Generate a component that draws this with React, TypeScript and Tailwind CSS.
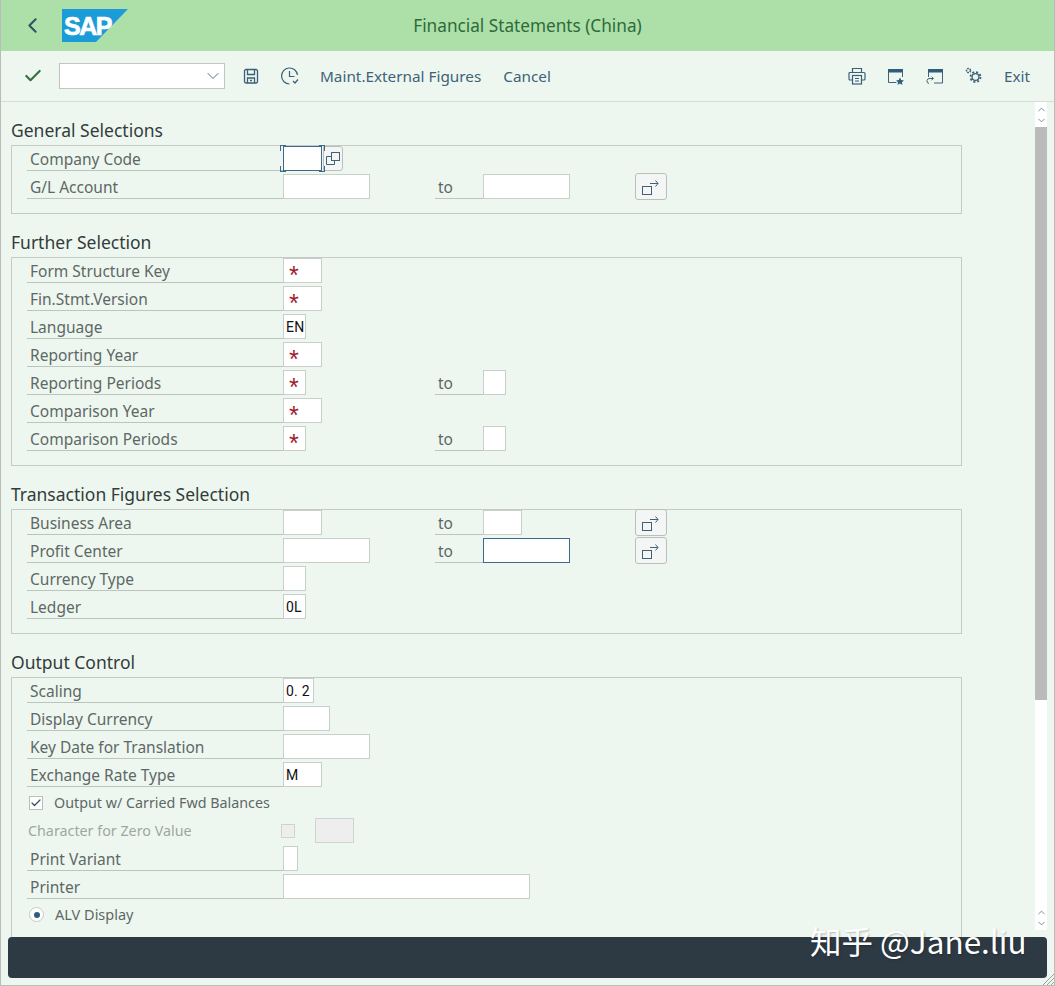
import React from "react";
import { Check, ChevronDown, ChevronLeft, ChevronUp } from "lucide-react";

const Field = ({ w, value, req, focus, active }: { w: string; value?: string; req?: boolean; focus?: boolean; active?: boolean }) => (
  <div className={`h-[25px] bg-white border flex items-center shrink-0 relative ${w} ${active || focus ? "border-[#3d6a8a]" : "border-[#c9cfca]"}`}>
    {req && <span className="pl-[5px] pt-[9px] text-[25px] leading-none text-[#a01c30] font-['Liberation_Sans',sans-serif]">*</span>}
    {value && <span className="pl-[2px] text-[14px] leading-none whitespace-pre text-[#111] font-['Roboto',sans-serif] tracking-[0.2px]">{value}</span>}
    {focus && (
      <>
        <span className="absolute -left-[4px] -top-[2px] w-[6px] h-[6px] border-l border-t border-[#3d6a8a]" />
        <span className="absolute -right-[4px] -top-[2px] w-[6px] h-[6px] border-r border-t border-[#3d6a8a]" />
        <span className="absolute -left-[4px] -bottom-[2px] w-[6px] h-[6px] border-l border-b border-[#3d6a8a]" />
        <span className="absolute -right-[4px] -bottom-[2px] w-[6px] h-[6px] border-r border-b border-[#3d6a8a]" />
      </>
    )}
  </div>
);

const MultiBtn = () => (
  <button className="w-[32px] h-[27px] -mt-[1px] rounded-[3px] border border-[#b9c0bb] bg-[#f3f6f4] flex items-center justify-center">
    <svg width="20" height="18" viewBox="0 0 20 18" fill="none" stroke="#3f6279" strokeWidth="1">
      <rect x="1.5" y="8.5" width="9" height="8" />
      <path d="M9 5.5h8M14.5 2.5l2.5 3-2.5 3" />
    </svg>
  </button>
);

type RowProps = {
  label: string;
  w: string;
  value?: string;
  req?: boolean;
  focus?: boolean;
  toW?: string;
  toActive?: boolean;
  multi?: boolean;
  f4?: boolean;
};

const Row = ({ label, w, value, req, focus, toW, toActive, multi, f4 }: RowProps) => (
  <div className="flex h-[25px]">
    <div className="w-[256px] shrink-0 border-b border-[#bcc4be] pl-[3px] text-[15.5px] leading-[27px] text-[#5d6866]">{label}</div>
    <div className="w-[152px] shrink-0 flex">
      <Field w={w} value={value} req={req} focus={focus} />
      {f4 && (
        <div className="w-[20px] h-[25px] ml-[1px] border border-[#b9c0bb] rounded-r-[3px] bg-[#f3f6f4] flex items-center justify-center">
          <svg width="18" height="18" viewBox="0 0 18 18" fill="none" stroke="#3f6279" strokeWidth="1">
            <rect x="7.5" y="2.5" width="8" height="8" />
            <path d="M7.5 6.5h-5v8h8v-4" />
          </svg>
        </div>
      )}
    </div>
    {toW && (
      <>
        <div className="w-[48px] shrink-0 border-b border-[#bcc4be] pl-[3px] text-[15.5px] leading-[27px] text-[#5d6866]">to</div>
        <div className="w-[152px] shrink-0">
          <Field w={toW} active={toActive} />
        </div>
      </>
    )}
    {multi && <MultiBtn />}
  </div>
);

const Section = ({ title, children }: { title: string; children: React.ReactNode }) => (
  <section className="mr-[73px]">
    <h2 className="h-[28px] text-[17.5px] leading-[26px] text-[#333c3c]">{title}</h2>
    <div className="border border-[#c4cbc6] pt-0 pb-[14px] pl-[15px] flex flex-col gap-[3px]">{children}</div>
  </section>
);

const SapLogo = () => (
  <svg width="66" height="33" viewBox="0 0 66 33" className="block">
    <polygon points="0,0 66,0 34,33 0,33" fill="#1b9bd8" />
    <text x="2" y="26" fontSize="25" fontWeight="700" fontFamily="'Liberation Sans', sans-serif" fill="#fff" stroke="#fff" strokeWidth="0.7" letterSpacing="-1.5">SAP</text>
  </svg>
);

const SaveIcon = () => (
  <svg width="18" height="18" viewBox="0 0 18 18" fill="none" stroke="#3a5f78" strokeWidth="1.3">
    <path d="M2.5 4a1.5 1.5 0 0 1 1.5-1.5h10a1.5 1.5 0 0 1 1.5 1.5v10.5a1.5 1.5 0 0 1-1.5 1.5H4a1.5 1.5 0 0 1-1.5-1.5z" />
    <path d="M5.5 2.5v5h7v-5M5.5 16v-5h7v5M8 13.5h2" />
  </svg>
);

const ClockIcon = () => (
  <svg width="20" height="20" viewBox="0 0 20 20" fill="none" stroke="#3a5f78" strokeWidth="1.2">
    <path d="M17.5 9a8 8 0 1 0-8 9" />
    <path d="M9.5 5v5.5h5M13 15l2 2 3-3.5" />
  </svg>
);

const PrintIcon = () => (
  <svg width="18" height="18" viewBox="0 0 18 18" fill="none" stroke="#3a5f78" strokeWidth="1.2">
    <path d="M4.5 5.5V1.5h9v4" />
    <path d="M4 13H2a1 1 0 0 1-1-1V6.5a1 1 0 0 1 1-1h14a1 1 0 0 1 1 1V12a1 1 0 0 1-1 1h-2" />
    <rect x="4.5" y="8.5" width="9" height="8.5" />
    <path d="M7 11.5h4M7 14h4" />
  </svg>
);

const WinStarIcon = () => (
  <svg width="18" height="18" viewBox="0 0 18 18" fill="none">
    <rect x="1" y="2" width="15" height="3.5" fill="#2f5d7c" />
    <path d="M1.5 5v10.5h8M15.5 5v5" stroke="#3f6279" />
    <path d="M13 10.5l1.2 2.6 2.8.3-2.1 1.9.6 2.7-2.5-1.4-2.5 1.4.6-2.7-2.1-1.9 2.8-.3z" fill="#2f5d7c" />
  </svg>
);

const WinArrowIcon = () => (
  <svg width="18" height="18" viewBox="0 0 18 18" fill="none">
    <rect x="2" y="2" width="15" height="3.5" fill="#2f5d7c" />
    <path d="M16.5 5v11H8M2.5 5v5" stroke="#3f6279" />
    <path d="M7 11.5H4a2.5 2.5 0 0 0-1 5M5.5 9.8L7.5 11.5 5.5 13" stroke="#3f6279" />
  </svg>
);

const GearsIcon = () => (
  <svg width="18" height="18" viewBox="0 0 18 18" fill="none" stroke="#3a5f78">
    <circle cx="3.5" cy="3.5" r="2" strokeWidth="1.5" strokeDasharray="1.6 0.8" />
    <circle cx="10.5" cy="10" r="3.4" strokeWidth="1.3" />
    <circle cx="10.5" cy="10" r="5" strokeWidth="1.8" strokeDasharray="2 1.93" />
  </svg>
);

export default function App() {
  return (
    <div className="w-[1055px] h-[986px] overflow-hidden relative flex flex-col bg-[#eef7ef] border-x border-b border-[#b8bdb9] font-['Noto_Sans',sans-serif]">
      <header className="h-[51px] shrink-0 bg-[#addfa9] grid grid-cols-[1fr_auto_1fr] items-center">
        <div className="flex items-center pl-[19px]">
          <ChevronLeft size={25} strokeWidth={2} className="text-[#2f5560]" />
          <div className="ml-[17px]"><SapLogo /></div>
        </div>
        <h1 className="text-[17.2px] text-[#2d6b3a] font-normal">Financial Statements (China)</h1>
        <div />
      </header>

      <div className="h-[51px] shrink-0 border-b border-[#d6ddd8] flex items-center pl-[22px] pr-[24px] text-[15.3px] text-[#3f6279]">
        <Check size={20} strokeWidth={2.6} className="text-[#38703f]" />
        <div className="ml-[16px] w-[166px] h-[26px] bg-white border border-[#bfc5c1] flex items-center justify-end pr-[1px]">
          <ChevronDown size={20} strokeWidth={1.1} className="text-[#3f6279]" />
        </div>
        <div className="ml-[17px]"><SaveIcon /></div>
        <div className="ml-[20px]"><ClockIcon /></div>
        <span className="ml-[20px]">Maint.External Figures</span>
        <span className="ml-[22px]">Cancel</span>
        <div className="ml-auto flex items-center gap-[21px]">
          <PrintIcon />
          <WinStarIcon />
          <WinArrowIcon />
          <GearsIcon />
          <span>Exit</span>
        </div>
      </div>

      <div className="flex h-[835px] shrink-0 overflow-hidden">
        <main className="flex-1 overflow-hidden pl-[10px] pt-[15px] flex flex-col gap-[15px]">
          <Section title="General Selections">
            <Row label="Company Code" w="w-[39px]" focus f4 />
            <Row label="G/L Account" w="w-[87px]" toW="w-[87px]" multi />
          </Section>
          <Section title="Further Selection">
            <Row label="Form Structure Key" w="w-[39px]" req />
            <Row label="Fin.Stmt.Version" w="w-[39px]" req />
            <Row label="Language" w="w-[23px]" value="EN" />
            <Row label="Reporting Year" w="w-[39px]" req />
            <Row label="Reporting Periods" w="w-[23px]" req toW="w-[23px]" />
            <Row label="Comparison Year" w="w-[39px]" req />
            <Row label="Comparison Periods" w="w-[23px]" req toW="w-[23px]" />
          </Section>
          <Section title="Transaction Figures Selection">
            <Row label="Business Area" w="w-[39px]" toW="w-[39px]" multi />
            <Row label="Profit Center" w="w-[87px]" toW="w-[87px]" toActive multi />
            <Row label="Currency Type" w="w-[23px]" />
            <Row label="Ledger" w="w-[23px]" value="0L" />
          </Section>
          <Section title="Output Control">
            <Row label="Scaling" w="w-[31px]" value="0. 2" />
            <Row label="Display Currency" w="w-[47px]" />
            <Row label="Key Date for Translation" w="w-[87px]" />
            <Row label="Exchange Rate Type" w="w-[39px]" value="M" />
            <div className="flex items-center h-[25px] pl-[2px]">
              <span className="w-[14px] h-[14px] bg-white border border-[#b9c0bb] flex items-center justify-center">
                <Check size={12} strokeWidth={2.4} className="text-[#2a4f6a]" />
              </span>
              <span className="ml-[11px] text-[14.3px] text-[#5d6866]">Output w/ Carried Fwd Balances</span>
            </div>
            <div className="flex items-center h-[25px] pl-[1px] text-[14.3px] text-[#9da7a3]">
              <span className="w-[253px] shrink-0">Character for Zero Value</span>
              <span className="w-[14px] h-[14px] bg-[#eeeeee] border border-[#cfd4d0]" />
              <span className="ml-[20px] w-[39px] h-[25px] bg-[#eeeeee] border border-[#cfd4d0]" />
            </div>
            <Row label="Print Variant" w="w-[15px]" />
            <Row label="Printer" w="w-[247px]" />
            <div className="flex items-center h-[25px] pl-[2px]">
              <span className="w-[15px] h-[15px] rounded-full bg-white border border-[#c5cbc7] flex items-center justify-center">
                <span className="w-[6px] h-[6px] rounded-full bg-[#2f5d7c]" />
              </span>
              <span className="ml-[11px] text-[14.5px] text-[#5d6866]">ALV Display</span>
            </div>
          </Section>
        </main>
        <div className="w-[12px] mr-[7px] mb-[7px] shrink-0 flex flex-col bg-white">
          <div className="h-[25px] shrink-0 flex flex-col items-center justify-center text-[#3f6279]">
            <ChevronUp size={11} strokeWidth={1.5} />
            <ChevronDown size={11} strokeWidth={1.5} />
          </div>
          <div className="h-[573px] shrink-0 bg-[#bbbbbb]" />
          <div className="mt-auto h-[25px] shrink-0 flex flex-col items-center justify-center text-[#3f6279]">
            <ChevronUp size={11} strokeWidth={1.5} />
            <ChevronDown size={11} strokeWidth={1.5} />
          </div>
        </div>
      </div>

      <footer className="h-[41px] shrink-0 ml-[7px] mr-[7px] rounded-[4px] bg-[#2d3a44]" />

      <svg width="12" height="12" viewBox="0 0 12 12" className="absolute right-0 bottom-0" stroke="#9aa09c" strokeWidth="1">
        <path d="M1 12L12 1M5 12l7-7M9 12l3-3" />
      </svg>
      <div className="absolute left-[809px] top-[917px] text-[31.5px] leading-[46px] text-white whitespace-nowrap font-['Noto_Sans_CJK_SC','Noto_Sans',sans-serif] [text-shadow:1px_1px_2px_rgba(0,0,0,0.25)]">
        知乎 @Jane.liu
      </div>
    </div>
  );
}
